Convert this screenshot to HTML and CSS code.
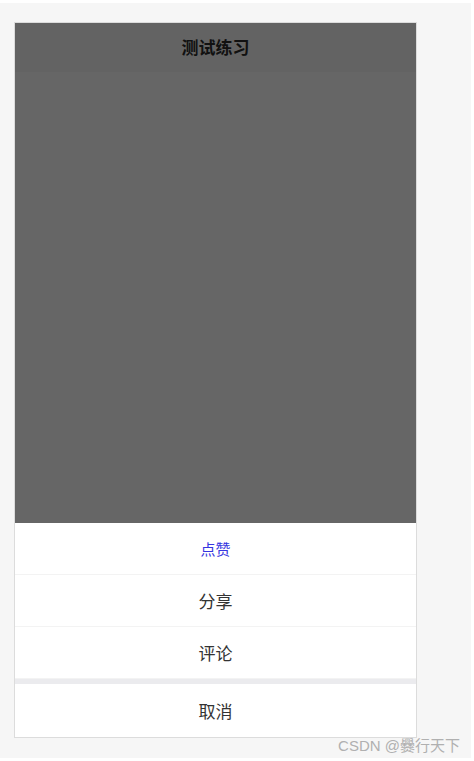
FILE: index.html
```html
<!DOCTYPE html>
<html lang="zh">
<head>
<meta charset="utf-8">
<title>测试练习</title>
<link rel="stylesheet" href="styles.css">
</head>
<body>
<div class="canvas">
  <div class="phone">
    <div class="screen">
      <div class="header">测试练习</div>
      <div class="mask"></div>
    </div>
    <div class="sheet">
      <div class="item item-primary">点赞</div>
      <div class="item">分享</div>
      <div class="item">评论</div>
      <div class="gap"></div>
      <div class="item item-cancel">取消</div>
    </div>
  </div>
  <div class="watermark">CSDN @爨行天下</div>
</div>
</body>
</html>
```
FILE: styles.css
```css
html, body {
  margin: 0;
  padding: 0;
  background: #ffffff;
  font-family: "Noto Sans CJK SC", "Noto Sans", sans-serif;
}

.canvas {
  margin-top: 3px;
  width: 471px;
  height: 755px;
  background: #f6f6f6;
  padding: 19px 0 0 14px;
  box-sizing: border-box;
}

.phone {
  width: 403px;
  height: 716px;
  box-sizing: border-box;
  border: 1px solid #dcdcdc;
  background: #ffffff;
  display: flex;
  flex-direction: column;
}

.screen {
  height: 500px;
  background: #666666;
  display: flex;
  flex-direction: column;
}

.header {
  height: 49px;
  background: #636363;
  color: #111111;
  font-size: 17px;
  font-weight: bold;
  display: flex;
  align-items: center;
  justify-content: center;
  padding-bottom: 2px;
  box-sizing: border-box;
}

.mask {
  flex: 1;
}

.sheet {
  display: flex;
  flex-direction: column;
  flex: 1;
}

.item {
  height: 52px;
  box-sizing: border-box;
  border-bottom: 1px solid #f3f3f3;
  display: flex;
  align-items: center;
  justify-content: center;
  font-size: 17px;
  color: #333333;
}

.item-primary {
  font-size: 15px;
  color: #3535e0;
}

.gap {
  height: 5px;
  background: #ebebee;
}

.item-cancel {
  flex: 1;
  border-bottom: none;
}

.watermark {
  text-align: right;
  padding-right: 11px;
  font-family: "Liberation Sans", "Noto Sans CJK SC", sans-serif;
  font-size: 15px;
  line-height: 15px;
  color: #b0b0b0;
}
```
